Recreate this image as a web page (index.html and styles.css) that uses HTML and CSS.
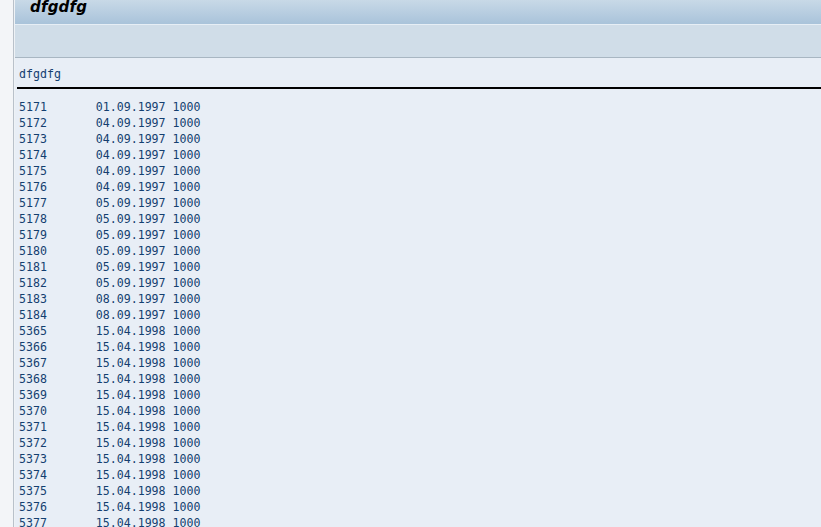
FILE: index.html
```html
<!DOCTYPE html>
<html>
<head>
<meta charset="utf-8">
<link rel="stylesheet" href="styles.css">
</head>
<body>
<div class="gutter"></div>
<div class="main">
  <div class="titlebar"><span class="title">dfgdfg</span></div>
  <div class="toolbar"></div>
  <div class="content">
    <div class="heading">dfgdfg</div>
    <div class="rule"></div>
    <pre class="list">5171       01.09.1997 1000
5172       04.09.1997 1000
5173       04.09.1997 1000
5174       04.09.1997 1000
5175       04.09.1997 1000
5176       04.09.1997 1000
5177       05.09.1997 1000
5178       05.09.1997 1000
5179       05.09.1997 1000
5180       05.09.1997 1000
5181       05.09.1997 1000
5182       05.09.1997 1000
5183       08.09.1997 1000
5184       08.09.1997 1000
5365       15.04.1998 1000
5366       15.04.1998 1000
5367       15.04.1998 1000
5368       15.04.1998 1000
5369       15.04.1998 1000
5370       15.04.1998 1000
5371       15.04.1998 1000
5372       15.04.1998 1000
5373       15.04.1998 1000
5374       15.04.1998 1000
5375       15.04.1998 1000
5376       15.04.1998 1000
5377       15.04.1998 1000</pre>
  </div>
</div>
</body>
</html>
```
FILE: styles.css
```css
html, body {
  margin: 0;
  padding: 0;
  height: 100%;
  overflow: hidden;
}
body {
  display: flex;
  background: #e8eef6;
}
.gutter {
  width: 13px;
  flex: none;
  background: #f3f5f8;
  border-right: 1px solid #b9c1ca;
}
.main {
  flex: 1;
  display: flex;
  flex-direction: column;
  border-left: 1px solid #eef2f6;
  min-width: 0;
}
.titlebar {
  flex: none;
  height: 25px;
  background: linear-gradient(#c8d9e7, #a9c3da);
  border-bottom: 1px solid #e6eef5;
  box-sizing: border-box;
  overflow: hidden;
  padding-left: 15px;
}
.title {
  display: block;
  font-family: "DejaVu Sans", sans-serif;
  font-weight: bold;
  font-style: italic;
  font-size: 15px;
  line-height: 15px;
  margin-top: 0;
  color: #000;
  letter-spacing: 0.2px;
}
.toolbar {
  flex: none;
  height: 32px;
  background: #d0dde8;
  border-bottom: 1px solid #a8b6c2;
}
.content {
  flex: 1;
  padding-left: 2px;
  color: #143f70;
  font-family: "DejaVu Sans Mono", monospace;
  font-size: 11.6px;
}
.heading {
  padding: 8px 0 0 2px;
  line-height: 16px;
  height: 21px;
}
.rule {
  height: 2px;
  background: #000;
}
.list {
  margin: 10px 0 0 2px;
  font: inherit;
  line-height: 16px;
}
```
